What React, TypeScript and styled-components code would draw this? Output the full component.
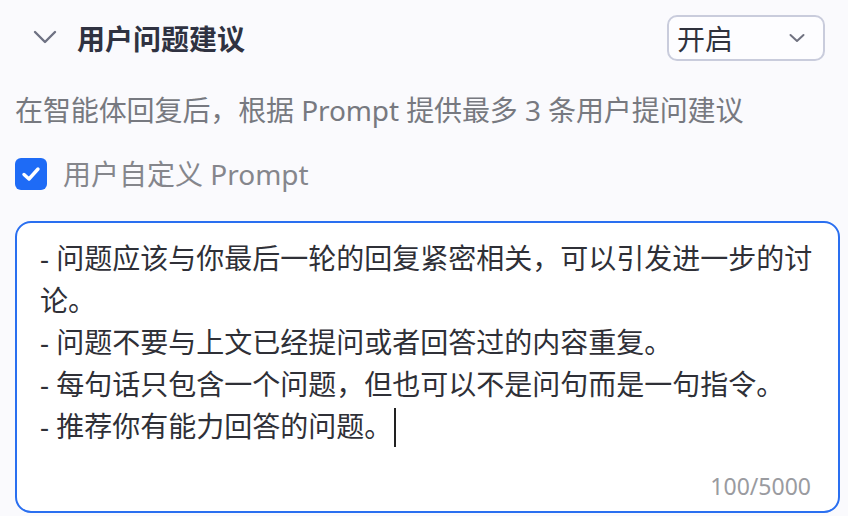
import styled, { createGlobalStyle } from "styled-components";

const GlobalStyle = createGlobalStyle`
  html, body {
    margin: 0;
    padding: 0;
    background: #fafafd;
  }
  body {
    font-family: "Noto Sans", "Noto Sans CJK SC", sans-serif;
  }
`;

const Panel = styled.div`
  width: 848px;
  height: 516px;
  box-sizing: border-box;
  padding: 15px 8px 0 15px;
  display: flex;
  flex-direction: column;
`;

const Header = styled.div`
  display: flex;
  align-items: center;
  justify-content: space-between;
  height: 46px;
  padding-right: 15px;
`;

const TitleGroup = styled.div`
  display: flex;
  align-items: center;
  gap: 20px;
  padding-left: 18px;
`;

const Title = styled.div`
  font-size: 28px;
  font-weight: 700;
  color: #2f3241;
  line-height: 1;
  font-family: "Noto Sans CJK SC", sans-serif;
`;

const Select = styled.div`
  width: 158px;
  height: 46px;
  box-sizing: border-box;
  border: 2px solid #c9ccdc;
  border-radius: 10px;
  background: #fdfdff;
  display: flex;
  align-items: center;
  justify-content: space-between;
  padding: 0 18px 0 8px;
`;

const SelectValue = styled.span`
  font-size: 28px;
  color: #30323d;
  font-family: "Noto Sans CJK SC", sans-serif;
`;

const Description = styled.div`
  margin-top: 29px;
  font-size: 28px;
  line-height: 40px;
  color: #777980;
  letter-spacing: -0.1px;
`;

const CheckRow = styled.label`
  margin-top: 26px;
  display: flex;
  align-items: center;
  gap: 16px;
`;

const CheckBox = styled.span`
  width: 32px;
  height: 32px;
  border-radius: 6px;
  background: #1e6bf6;
  display: flex;
  align-items: center;
  justify-content: center;
`;

const CheckLabel = styled.span`
  font-size: 28px;
  color: #85868c;
  line-height: 36px;
`;

const TextBox = styled.div`
  margin-top: 29px;
  width: 825px;
  height: 292px;
  box-sizing: border-box;
  border: 2px solid #2a6ff0;
  border-radius: 16px;
  background: #ffffff;
  padding: 14px 16px 0 23px;
  display: flex;
  flex-direction: column;
  justify-content: space-between;
`;

const Content = styled.div`
  font-size: 28px;
  line-height: 42px;
  color: #2f3037;
`;

const Caret = styled.span`
  display: inline-block;
  width: 2px;
  height: 39px;
  background: #222;
  vertical-align: middle;
  margin-left: 2px;
  margin-top: -4px;
`;

const Counter = styled.div`
  align-self: flex-end;
  font-size: 23px;
  color: #9a9ba0;
  padding: 0 11px 9px 0;
`;

const lines = [
  "- 问题应该与你最后一轮的回复紧密相关，可以引发进一步的讨论。",
  "- 问题不要与上文已经提问或者回答过的内容重复。",
  "- 每句话只包含一个问题，但也可以不是问句而是一句指令。",
  "- 推荐你有能力回答的问题。",
];

export default function App() {
  return (
    <>
      <GlobalStyle />
      <Panel>
        <Header>
          <TitleGroup>
            <svg width="24" height="16" viewBox="0 0 24 16">
              <path d="M2 2 L12 12 L22 2" fill="none" stroke="#6e7183" strokeWidth="2.4" strokeLinecap="round" strokeLinejoin="round" />
            </svg>
            <Title>用户问题建议</Title>
          </TitleGroup>
          <Select>
            <SelectValue>开启</SelectValue>
            <svg width="16" height="10" viewBox="0 0 16 10">
              <path d="M1.5 2 L8 8 L14.5 2" fill="none" stroke="#707280" strokeWidth="2" strokeLinecap="round" strokeLinejoin="round" />
            </svg>
          </Select>
        </Header>
        <Description>在智能体回复后，根据 Prompt 提供最多 3 条用户提问建议</Description>
        <CheckRow>
          <CheckBox>
            <svg width="20" height="16" viewBox="0 0 20 16">
              <path d="M3 8.5 L8 13 L17 3" fill="none" stroke="#ffffff" strokeWidth="3.4" strokeLinecap="round" strokeLinejoin="round" />
            </svg>
          </CheckBox>
          <CheckLabel>用户自定义 Prompt</CheckLabel>
        </CheckRow>
        <TextBox>
          <Content>
            {lines.map((line, i) => (
              <div key={i}>
                {line}
                {i === lines.length - 1 && <Caret />}
              </div>
            ))}
          </Content>
          <Counter>100/5000</Counter>
        </TextBox>
      </Panel>
    </>
  );
}
